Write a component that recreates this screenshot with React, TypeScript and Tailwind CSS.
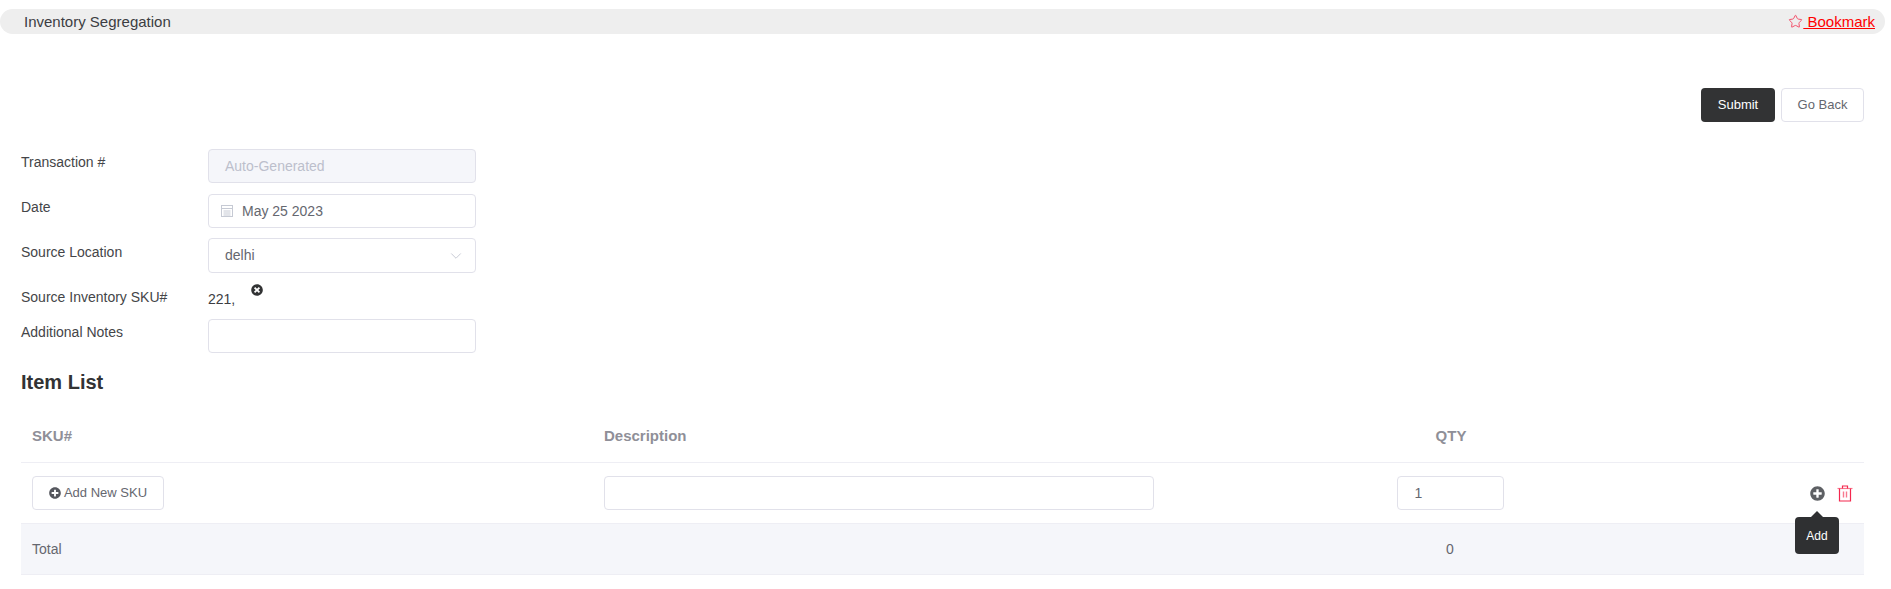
import { Star, ChevronDown } from "lucide-react";
import { FaPlusCircle, FaTimesCircle } from "react-icons/fa";

const inputBox =
  "h-[34px] w-[268px] rounded-[4px] border border-[#e1e1ea] px-[16px] text-[14px] text-[#65676f] flex items-center";

function FormRow({ label, children, className }: { label: string; children?: React.ReactNode; className: string }) {
  return (
    <div className={`flex ${className}`}>
      <label className="w-[187px] shrink-0 pt-[3px] text-[14px] leading-[20px] text-[#444548]">{label}</label>
      {children}
    </div>
  );
}

function CalendarIcon() {
  return (
    <svg width="14" height="14" viewBox="0 0 14 14" fill="none" stroke="#c6cad4" strokeWidth="1">
      <rect x="1.5" y="1.5" width="11" height="11" />
      <path d="M1.5 4.5h11M3.5 7h7M3.5 9h7M3.5 11h7" />
    </svg>
  );
}

function TrashIcon() {
  return (
    <svg width="16" height="17" viewBox="0 0 16 17" fill="none" stroke="#f4284f" strokeWidth="1.2">
      <path d="M0.5 3.5h15" stroke="#f8798f" />
      <path d="M5.5 3.5v-2.5h5v2.5" />
      <path d="M2.5 3.5v12.5h11v-12.5" />
      <path d="M6.5 6.5v6M9.5 6.5v6" stroke="#f8798f" strokeWidth="1.4" />
    </svg>
  );
}

export default function App() {
  return (
    <div className="min-h-[589px] bg-white font-['Liberation_Sans',Arial,sans-serif] overflow-hidden">
      {/* Barra de titulo */}
      <div className="pt-[9px] pr-[6px]">
        <div className="flex h-[25px] items-center justify-between rounded-full bg-[#eeeeee] pl-[24px] pr-[10px]">
          <span className="pt-px text-[15px] text-[#3c3d42]">Inventory Segregation</span>
          <a className="whitespace-pre pt-px text-[15px] text-[#ff0000] underline">
            <Star className="inline-block h-[15px] w-[15px] align-[-2px] text-[#f4516c]" strokeWidth={1.6} />
            {" Bookmark"}
          </a>
        </div>
      </div>

      <div className="pl-[21px] pr-[27px]">
        {/* Botoes */}
        <div className="mt-[54px] flex justify-end gap-[6px]">
          <button className="h-[34px] w-[74px] rounded-[4px] bg-[#323334] text-[13px] text-white">Submit</button>
          <button className="h-[34px] w-[83px] rounded-[4px] border border-[#e1e1ea] bg-white text-[13px] text-[#65676f]">Go Back</button>
        </div>

        {/* Formulario */}
        <FormRow label="Transaction #" className="mt-[27px]">
          <div className={`${inputBox} bg-[#f5f6fa] !text-[#bcbfcc]`}>Auto-Generated</div>
        </FormRow>
        <FormRow label="Date" className="mt-[11px]">
          <div className={`${inputBox} gap-[8px] pl-[11px]`}>
            <CalendarIcon />
            May 25 2023
          </div>
        </FormRow>
        <FormRow label="Source Location" className="mt-[10px] [&>label]:pt-[4px]">
          <div className={`${inputBox} h-[35px] justify-between pr-[10px]`}>
            delhi
            <ChevronDown className="h-[18px] w-[18px] text-[#c4c7d2]" strokeWidth={1.25} />
          </div>
        </FormRow>
        <FormRow label="Source Inventory SKU#" className="mt-[11px] h-[35px]">
          <span className="pt-[5px] text-[14px] leading-[20px] text-[#3c3d42]">221,</span>
          <FaTimesCircle className="ml-[16px] h-[12px] w-[12px] text-[#323334]" />
        </FormRow>
        <FormRow label="Additional Notes" className="h-[34px]">
          <div className={inputBox} />
        </FormRow>

        <h2 className="mt-[16px] text-[20px] leading-[26px] font-bold text-[#323334]">Item List</h2>

        {/* Tabela */}
        <div className="mt-[14px] grid grid-cols-[572px_572px_570px_129px] text-[14px] text-[#65676f]">
          <div className="flex h-[54px] items-center border-b border-[#eeeef4] px-[11px] pt-[2px] text-[15px] font-bold text-[#8f8f98]">SKU#</div>
          <div className="flex h-[54px] items-center border-b border-[#eeeef4] px-[11px] pt-[2px] text-[15px] font-bold text-[#8f8f98]">Description</div>
          <div className="flex h-[54px] items-center justify-center border-b border-[#eeeef4] pl-[2px] pt-[2px] text-[15px] font-bold text-[#8f8f98]">QTY</div>
          <div className="h-[54px] border-b border-[#eeeef4]" />

          <div className="flex h-[61px] items-center border-b border-[#eeeef4] px-[11px]">
            <button className="flex h-[34px] w-[132px] items-center justify-center gap-[3px] rounded-[4px] border border-[#e1e1ea] bg-white text-[13px] text-[#65676f]">
              <FaPlusCircle className="h-[12px] w-[12px] text-[#55575e]" />
              Add New SKU
            </button>
          </div>
          <div className="flex h-[61px] items-center border-b border-[#eeeef4] px-[11px]">
            <div className="h-[34px] w-full rounded-[4px] border border-[#e1e1ea] bg-white" />
          </div>
          <div className="flex h-[61px] items-center justify-center border-b border-[#eeeef4]">
            <div className="flex h-[34px] w-[107px] items-center rounded-[4px] border border-[#e1e1ea] bg-white px-[17px]">1</div>
          </div>
          <div className="relative flex h-[61px] items-center justify-end gap-[12px] border-b border-[#eeeef4] pr-[11px]">
            <FaPlusCircle className="h-[15px] w-[15px] text-[#5e6064]" />
            <TrashIcon />
            {/* Tooltip */}
            <div className="absolute right-[25px] top-[54px] z-10 flex h-[37px] w-[44px] items-center justify-center rounded-[4px] bg-[#2f3032] text-[12px] font-medium text-white">
              <span className="absolute left-1/2 top-[-6px] h-0 w-0 -translate-x-1/2 border-x-[6px] border-b-[6px] border-x-transparent border-b-[#2f3032]" />
              Add
            </div>
          </div>

          <div className="flex h-[51px] items-center border-b border-[#eeeef4] bg-[#f5f6fa] px-[11px]">Total</div>
          <div className="h-[51px] border-b border-[#eeeef4] bg-[#f5f6fa]" />
          <div className="flex h-[51px] items-center justify-center border-b border-[#eeeef4] bg-[#f5f6fa]">0</div>
          <div className="h-[51px] border-b border-[#eeeef4] bg-[#f5f6fa]" />
        </div>
      </div>
    </div>
  );
}
